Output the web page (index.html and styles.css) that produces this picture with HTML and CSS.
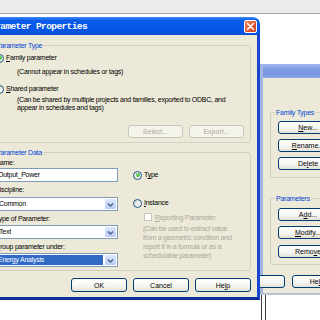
FILE: index.html
```html
<!DOCTYPE html>
<html lang="en">
<head>
    <meta charset="UTF-8">
    <meta name="viewport" content="width=device-width, initial-scale=1.0">
    <title>Parameter Properties</title>
    <link rel="stylesheet" href="styles.css">
</head>
<body>
    <div class="topbar"></div>

    <div class="window back">
        <div class="back-title"></div>
        <div class="back-body">
            <fieldset class="group side-group">
                <legend>Family Types</legend>
                <button class="btn side-btn"><u>N</u>ew...</button>
                <button class="btn side-btn"><u>R</u>ename...</button>
                <button class="btn side-btn">De<u>l</u>ete</button>
            </fieldset>
            <fieldset class="group side-group params">
                <legend>Parameters</legend>
                <button class="btn side-btn">A<u>d</u>d...</button>
                <button class="btn side-btn"><u>M</u>odify...</button>
                <button class="btn side-btn">Remo<u>v</u>e</button>
            </fieldset>
            <div class="back-actions">
                <button class="btn back-apply"></button>
                <button class="btn back-help">He<u>l</u>p</button>
            </div>
        </div>
    </div>
    <div class="under"></div>

    <div class="window dialog">
        <div class="titlebar">
            <span class="title">Parameter Properties</span>
            <span class="close">
                <svg width="11" height="11" viewBox="0 0 11 11">
                    <path d="M2.5 2.5 L8.5 8.5 M8.5 2.5 L2.5 8.5" stroke="#fff" stroke-width="1.6" stroke-linecap="round"/>
                </svg>
            </span>
        </div>
        <div class="dlg-body">
            <fieldset class="group type-group">
                <legend>Parameter Type</legend>
                <div class="option option-family"><span class="radio checked"></span><span><u>F</u>amily parameter</span></div>
                <div class="hint hint-family">(Cannot appear in schedules or tags)</div>
                <div class="option option-shared"><span class="radio"></span><span><u>S</u>hared parameter</span></div>
                <div class="hint hint-shared">(Can be shared by multiple projects and families, exported to ODBC, and<br>appear in schedules and tags)</div>
                <div class="type-actions">
                    <button class="btn" disabled>Select...</button>
                    <button class="btn" disabled>Export...</button>
                </div>
            </fieldset>

            <fieldset class="group data-group">
                <legend>Parameter Data</legend>
                <div class="data-cols">
                    <div class="data-left">
                        <div class="field-label first"><u>N</u>ame:</div>
                        <div class="textbox">Output_Power</div>
                        <div class="field-label"><u>D</u>iscipline:</div>
                        <div class="combo combo-first">
                            <span class="combo-value">Common</span>
                            <span class="combo-btn"><svg width="9" height="9" viewBox="0 0 9 9"><path d="M2 3.5 L4.5 6 L7 3.5" fill="none" stroke="#4d6185" stroke-width="1.5"/></svg></span>
                        </div>
                        <div class="field-label"><u>T</u>ype of Parameter:</div>
                        <div class="combo">
                            <span class="combo-value">Text</span>
                            <span class="combo-btn"><svg width="9" height="9" viewBox="0 0 9 9"><path d="M2 3.5 L4.5 6 L7 3.5" fill="none" stroke="#4d6185" stroke-width="1.5"/></svg></span>
                        </div>
                        <div class="field-label"><u>G</u>roup parameter under:</div>
                        <div class="combo">
                            <span class="combo-value selected">Energy Analysis</span>
                            <span class="combo-btn"><svg width="9" height="9" viewBox="0 0 9 9"><path d="M2 3.5 L4.5 6 L7 3.5" fill="none" stroke="#4d6185" stroke-width="1.5"/></svg></span>
                        </div>
                    </div>
                    <div class="data-right">
                        <div class="option option-type"><span class="radio checked"></span><span>T<u>y</u>pe</span></div>
                        <div class="option option-instance"><span class="radio"></span><span><u>I</u>nstance</span></div>
                        <div class="check-row"><span class="checkbox"></span><span><u>R</u>eporting Parameter</span></div>
                        <div class="hint-disabled">(Can be used to extract value<br>from a geometric condition and<br>report it in a formula or as a<br>schedulable parameter)</div>
                    </div>
                </div>
            </fieldset>

            <div class="dlg-actions">
                <button class="btn">OK</button>
                <button class="btn">Cancel</button>
                <button class="btn">He<u>l</u>p</button>
            </div>
        </div>
    </div>
</body>
</html>
```

FILE: styles.css
```css
* {
    box-sizing: border-box;
}
body {
    margin: 0;
    width: 320px;
    height: 320px;
    overflow: hidden;
    position: relative;
    background: #fff;
    font-family: "Liberation Sans", Arial, sans-serif;
    font-size: 7px;
    letter-spacing: -0.25px;
    color: #000;
}
u {
    text-decoration: underline;
}
.topbar {
    height: 14px;
    background: #ebebeb;
    border-bottom: 1px solid #a3a3a3;
}

/* windows on the desktop */
.window {
    position: absolute;
}
.back {
    left: 258px;
    top: 64px;
    width: 100px;
    height: 231px;
    display: flex;
    flex-direction: column;
    border-left: 5px solid #a4b5e2;
    border-bottom: 2px solid #bcc4d4;
    background: #ece9d8;
}
.back-title {
    height: 14px;
    background: linear-gradient(#a3baf0, #819de4 35%, #7a97e1 75%, #8ba7e8);
}
.back-body {
    flex: 1;
    padding: 30px 0 0 7px;
}
.under {
    position: absolute;
    left: 261px;
    top: 295px;
    width: 5px;
    height: 25px;
    border-left: 1px solid #3a3a3a;
    border-right: 1px solid #3a3a3a;
}

.dialog {
    left: -22px;
    top: 17px;
    width: 282px;
    z-index: 2;
}
.titlebar {
    height: 18px;
    display: flex;
    align-items: center;
    justify-content: space-between;
    padding: 0 3px 0 7px;
    border-radius: 7px 7px 0 0;
    background: linear-gradient(#3b8bf5, #0b5ce9 18%, #0657e6 70%, #0a4fd6);
}
.title {
    font-family: "Liberation Mono", "DejaVu Sans Mono", monospace;
    font-weight: bold;
    font-size: 9.5px;
    letter-spacing: -0.6px;
    color: #fff;
}
.close {
    width: 13px;
    height: 13px;
    display: flex;
    align-items: center;
    justify-content: center;
    border: 1px solid #fff;
    border-radius: 2px;
    background: linear-gradient(135deg, #f08a5d, #e0502a 60%, #c8411f);
}
.dlg-body {
    background: #ece9d8;
    border: 3px solid #1a46cf;
    border-top: 0;
    border-bottom-color: #0b2b9f;
    padding: 6px 6px 5px 8px;
}

/* group boxes */
.group {
    margin: 0;
    min-width: 0;
    border: 1px solid #d0d0bf;
    border-radius: 3px;
}
.group legend {
    padding: 0 1px;
    line-height: 9px;
    color: #0046d5;
}
.type-group {
    padding: 0 6px 4px 5px;
}
.data-group {
    margin-top: 5px;
    padding: 0 6px 3px 5px;
}

.option {
    display: flex;
    align-items: center;
    gap: 2px;
    height: 10px;
    line-height: 10px;
    white-space: nowrap;
}
.option-family {
    margin-top: 3px;
}
.option-shared {
    margin-top: 7px;
}
.radio {
    width: 9px;
    height: 9px;
    flex: none;
    border: 1px solid #1c5180;
    border-radius: 50%;
    background: linear-gradient(135deg, #dcdcd5, #fff);
    display: flex;
    align-items: center;
    justify-content: center;
}
.radio.checked::after {
    content: "";
    width: 4px;
    height: 4px;
    border-radius: 50%;
    background: radial-gradient(circle at 35% 35%, #7be07b, #21a121);
}
.hint {
    padding-left: 22px;
    white-space: nowrap;
}
.hint-family {
    margin-top: 4px;
    line-height: 10px;
}
.hint-shared {
    margin-top: 2px;
    line-height: 8px;
}
.type-actions {
    margin-top: 13px;
    display: flex;
    justify-content: flex-end;
    gap: 6px;
}
.type-actions .btn {
    width: 55px;
    height: 13px;
}

/* buttons */
.btn {
    font: inherit;
    color: #000;
    padding: 0;
    border: 1px solid #003c74;
    border-radius: 3px;
    background: linear-gradient(#fff, #f4f4f0 60%, #e2e0d5);
    white-space: nowrap;
    overflow: hidden;
}
.btn:disabled {
    border-color: #c9c7ba;
    color: #aca899;
    background: #f5f4ea;
}

/* parameter data */
.data-cols {
    display: flex;
    gap: 15px;
}
.data-left {
    width: 123px;
    flex: none;
}
.data-right {
    flex: 1;
    min-width: 0;
}
.field-label {
    margin-top: 3px;
    line-height: 10px;
    white-space: nowrap;
}
.field-label.first {
    margin-top: 1px;
}
.textbox {
    height: 14px;
    line-height: 12px;
    padding-left: 2px;
    border: 1px solid #7f9db9;
    background: #fff;
}
.combo {
    display: flex;
    height: 14px;
    margin-top: 1px;
    border: 1px solid #7f9db9;
    background: #fff;
}
.combo-first {
    margin-top: 2px;
}
.combo-value {
    flex: 1;
    line-height: 12px;
    padding-left: 3px;
    white-space: nowrap;
}
.combo-value.selected {
    margin: 1px;
    padding-left: 1px;
    line-height: 10px;
    background: #316ac5;
    color: #fff;
}
.combo-btn {
    width: 11px;
    margin: 1px;
    border-radius: 1px;
    background: linear-gradient(#dce6fd, #b9cbf7);
    display: flex;
    align-items: center;
    justify-content: center;
}
.option-type {
    margin-top: 13px;
}
.option-instance {
    margin-top: 18px;
}
.check-row {
    margin-top: 4px;
    height: 10px;
    padding-left: 11px;
    display: flex;
    align-items: center;
    gap: 3px;
    color: #aca899;
    white-space: nowrap;
}
.checkbox {
    width: 8px;
    height: 8px;
    border: 1px solid #cac8bb;
    background: #fff;
}
.hint-disabled {
    margin-top: 2px;
    padding-left: 10px;
    line-height: 9px;
    color: #aca899;
    white-space: nowrap;
}
.dlg-actions {
    margin-top: 7px;
    display: flex;
    justify-content: flex-end;
    gap: 6px;
}
.dlg-actions .btn {
    width: 56px;
    height: 14px;
}

/* background window */
.side-group {
    padding: 0 0 7px 4px;
}
.side-group.params {
    margin-top: 16px;
    padding-bottom: 6px;
}
.side-btn {
    display: block;
    width: 60px;
    height: 13px;
    margin: 5px 0 0 3px;
}
.side-group .side-btn:first-of-type {
    margin-top: 4px;
}
.side-group.params .side-btn:first-of-type {
    margin-top: 5px;
}
.side-group.params .side-btn:last-of-type {
    margin-top: 6px;
}
.back-actions {
    margin: 10px 0 0 -40px;
    display: flex;
    gap: 7px;
}
.back-apply {
    width: 55px;
    height: 13px;
}
.back-help {
    width: 50px;
    height: 13px;
}
```
